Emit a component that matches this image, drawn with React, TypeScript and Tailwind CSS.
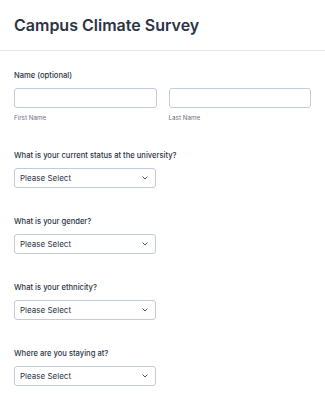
import React from "react";

function Chevron() {
  return (
    <svg width="6" height="4" viewBox="0 0 6 4" className="absolute right-[7px] top-1/2 -translate-y-1/2">
      <path d="M0.8 0.8 L3 3 L5.2 0.8" fill="none" stroke="#4b5263" strokeWidth="1" strokeLinecap="round" strokeLinejoin="round" />
    </svg>
  );
}

function SelectQ({ label }: { label: string }) {
  return (
    <div className="flex flex-col">
      <div className="text-[7.6px] leading-[12px] font-medium text-[#2c3345]">{label}</div>
      <div className="relative mt-[6px] h-[20px] w-[142px] rounded-[3px] border border-[#c3cad8] bg-white flex items-center pl-[5px]">
        <span className="text-[8px] text-[#2c3345]">Please Select</span>
        <Chevron />
      </div>
    </div>
  );
}

export default function App() {
  return (
    <div className="w-[325px] h-[400px] bg-white overflow-hidden" style={{ fontFamily: "Inter, 'Noto Sans', sans-serif" }}>
      <div className="h-[51px] border-b border-[#e6e8ee] px-[14px] pt-[14px]">
        <h1 className="text-[16px] leading-[22px] font-semibold text-[#2c3345]">Campus Climate Survey</h1>
      </div>
      <div className="px-[14px] pt-[19px]">
        <div className="text-[7.6px] leading-[12px] font-medium text-[#2c3345]">Name (optional)</div>
        <div className="mt-[6px] grid grid-cols-2 gap-[12px]">
          <div className="flex flex-col">
            <div className="h-[20px] rounded-[3px] border border-[#c3cad8] bg-white" />
            <div className="mt-[5px] text-[6.3px] leading-[10px] text-[#6c7386]">First Name</div>
          </div>
          <div className="flex flex-col">
            <div className="h-[20px] rounded-[3px] border border-[#c3cad8] bg-white" />
            <div className="mt-[5px] text-[6.3px] leading-[10px] text-[#6c7386]">Last Name</div>
          </div>
        </div>
        <div className="mt-[27px] flex flex-col gap-[28px]">
          <SelectQ label="What is your current status at the university?" />
          <SelectQ label="What is your gender?" />
          <SelectQ label="What is your ethnicity?" />
          <SelectQ label="Where are you staying at?" />
        </div>
      </div>
    </div>
  );
}
